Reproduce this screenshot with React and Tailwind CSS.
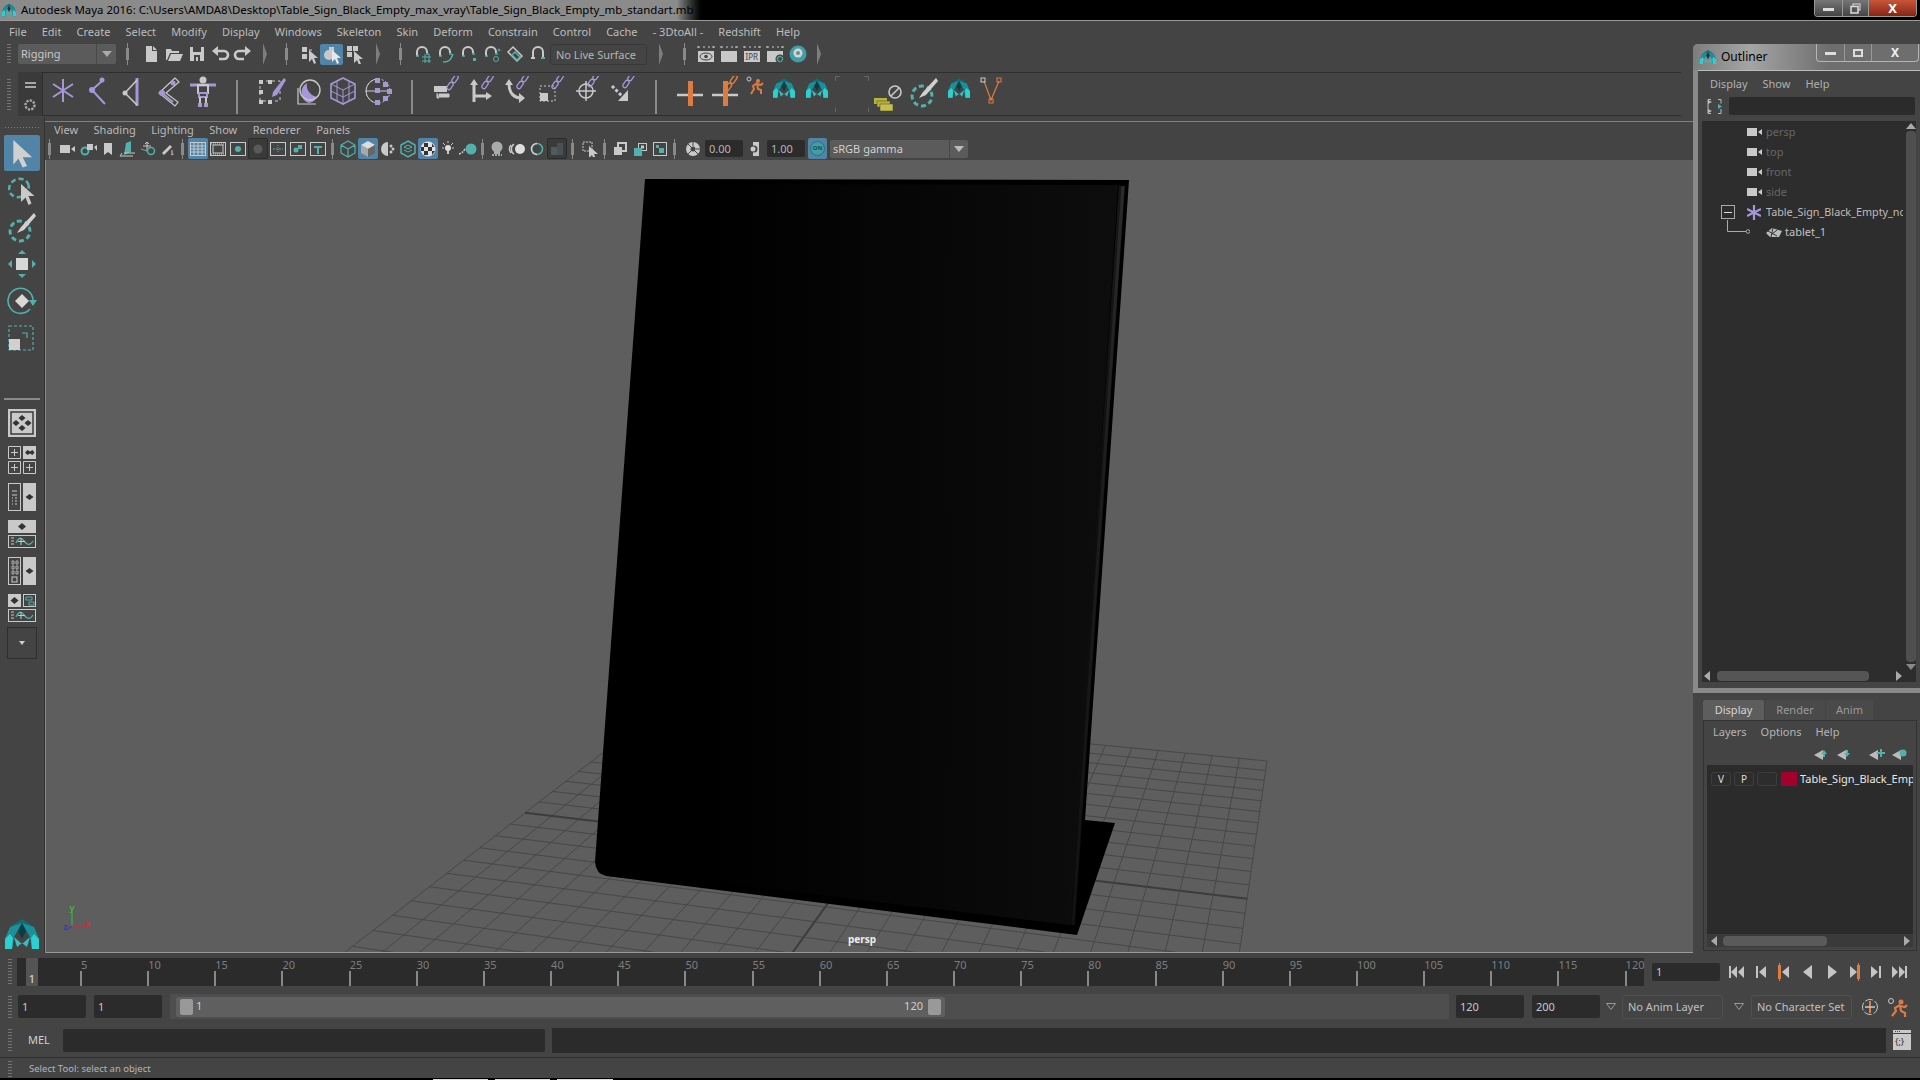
import React from "react";

const L = "#c9c9c9";
const T = "#52b0ad";
const P = "#a697d6";
const O = "#dd7b42";

const Svg = ({ w = 20, h = 20, children, className = "" }) => (
  <svg width={w} height={h} viewBox={`0 0 ${w} ${h}`} fill="none" className={`shrink-0 ${className}`}>
    {children}
  </svg>
);

// small toolbar bits
const Handle = ({ h = 22 }) => (
  <Svg w={3} h={h}>
    <rect x="1" width="1" height={h} fill="#8a8a8a" />
    <rect y={h / 2 - 6} width="3" height="12" fill="#8a8a8a" />
  </Svg>
);
const Fold = () => (
  <Svg w={4} h={22}>
    <path d="M0 0l4 11-4 11z" fill="#7d7d7d" />
  </Svg>
);
const Grip = ({ h = 22 }) => (
  <div className="w-[4px] shrink-0 bg-[radial-gradient(#777_35%,transparent_45%)] bg-[length:2px_3px]" style={{ height: h }} />
);

const Cell = ({ active, dark, w = "w-[20px]", children }) => (
  <div className={`${w} h-[21px] shrink-0 flex items-center justify-center ${active ? "bg-[#5284a8] rounded-[2px]" : ""} ${dark ? "bg-[#3a3a3a] border border-[#2b2b2b] rounded-[2px]" : ""}`}>
    {children}
  </div>
);

const Cursor = ({ x = 0, y = 0, s = 1, fill = L }) => (
  <path transform={`translate(${x} ${y}) scale(${s})`} d="M0 0l9 8H5l2 5-2 1-2-5-3 3z" fill={fill} />
);

const Cam = ({ c = L }) => (
  <Svg w={16} h={12}>
    <rect x="0" y="2" width="10" height="8" fill={c} />
    <path d="M11 6l4-3v6z" fill={c} />
  </Svg>
);

const NewFile = () => <Svg><path d="M5 2h6v5h5v11H5zM12 2l4 4h-4z" fill={L} /></Svg>;
const OpenFile = () => <Svg><path d="M2 5h5l1 2h7v2H6l-3 7H2z" fill={L} /><path d="M7 10h12l-3 7H4z" fill={L} /></Svg>;
const SaveFile = () => <Svg><path d="M3 3h14v14H3z" fill={L} /><rect x="6" y="3" width="8" height="5" fill="#444" /><rect x="7" y="11" width="6" height="6" fill="#444" /><rect x="9" y="13" width="2" height="4" fill={L} /></Svg>;
const Undo = () => <Svg><path d="M7 7h7a3.5 3.5 0 0 1 0 8H9" stroke={L} strokeWidth="2.6" /><path d="M8 2v10L2 7z" fill={L} /></Svg>;
const Redo = () => <Svg><path d="M13 7H6a3.5 3.5 0 0 0 0 8h5" stroke={L} strokeWidth="2.6" /><path d="M12 2v10l6-5z" fill={L} /></Svg>;

const SelHier = () => <Svg><rect x="3" y="3" width="5" height="5" fill={L} /><rect x="3" y="10" width="5" height="5" fill={L} /><path d="M10 6h3M10 12h2" stroke={L} /><Cursor x={10} y={6} /></Svg>;
const SelObj = () => <Svg><circle cx="7" cy="11" r="5" fill={L} /><rect x="7" y="3" width="5" height="5" fill={L} /><Cursor x={10} y={6} fill="#e8e8e8" /></Svg>;
const SelComp = () => <Svg><rect x="2" y="2" width="5" height="5" fill={L} /><rect x="8" y="2" width="5" height="5" fill={L} /><rect x="2" y="8" width="5" height="5" fill={L} /><Cursor x={9} y={7} /></Svg>;

const Magnet = ({ children }) => (
  <Svg>
    <path d="M4 12V8a5 5 0 0 1 10 0v1" stroke={L} strokeWidth="2" />
    <path d="M3 12h3M13 10h3" stroke={T} strokeWidth="1.5" />
    {children}
  </Svg>
);
const Snap1 = () => <Magnet><path d="M9 13h9M9 17h9M12 10v9M16 10v9" stroke={T} /></Magnet>;
const Snap2 = () => <Magnet><path d="M7 18c6 0 8-2 10-8" stroke={T} strokeWidth="1.5" /></Magnet>;
const Snap3 = () => <Magnet><rect x="14" y="14" width="3" height="3" fill={T} /></Magnet>;
const Snap4 = () => <Magnet><circle cx="14" cy="15" r="2.5" stroke={T} /><circle cx="17" cy="6" r="1" stroke={T} /></Magnet>;
const Snap5 = () => <Svg><path d="M3 8l5-5 9 9-5 5z" stroke={L} strokeWidth="1.5" /><path d="M7 11l3-3 5 5-3 3z" stroke={T} strokeWidth="1.5" /></Svg>;
const Snap6 = () => <Svg><path d="M5 14V8a5 5 0 0 1 10 0v6" stroke={L} strokeWidth="2" /><path d="M3 14h4" stroke={L} strokeWidth="2" /><path d="M13 14h4" stroke={T} strokeWidth="2" /></Svg>;

const Clap = ({ children }) => (
  <Svg h={22}>
    <path d="M2 4h3M7 4h3M12 4h3M16 4h2M2 3v3M18 3v3" stroke={L} strokeDasharray="2 1" />
    <rect x="2" y="8" width="16" height="11" fill={L} />
    {children}
  </Svg>
);
const RenderEye = () => <Clap><ellipse cx="10" cy="13.5" rx="6" ry="3.5" stroke="#444" /><circle cx="10" cy="13.5" r="1.8" fill="#444" /></Clap>;
const RenderPlain = () => <Clap />;
const RenderIpr = () => <Clap><text x="3.5" y="17" fontSize="8" fill="#444" fontFamily="Noto Sans">IPR</text></Clap>;
const RenderGear = () => <Clap><circle cx="15" cy="16" r="4.5" fill="#444" /><circle cx="15" cy="16" r="2.6" stroke={T} strokeWidth="1.5" strokeDasharray="1.5 .5" /></Clap>;
const Hypershade = () => <Svg w={20} h={20}><circle cx="10" cy="10" r="8.5" fill="#3f9fa8" /><circle cx="10" cy="9" r="4.5" fill="#d5d5d5" /><circle cx="10" cy="9" r="2" fill="#6a8e94" /></Svg>;

const Cam2 = () => <Svg w={18} h={14}><circle cx="6" cy="9" r="3.5" stroke={T} strokeWidth="2" /><rect x="8" y="2" width="6" height="6" fill={L} /><path d="M15 5l3-2v6z" fill={L} /></Svg>;
const Bookmark = () => <Svg w={10} h={14}><path d="M1 1h8v12L5 10l-4 3z" fill={L} /></Svg>;
const ImagePlane = () => <Svg w={18} h={16}><path d="M5 14l2-12 5-2v11z" fill={T} /><path d="M1 15h13M3 12l-2 3M16 12H5" stroke={L} /></Svg>;
const Gimbal = () => <Svg w={18} h={16}><path d="M8 1v9M4 5h8" stroke={L} /><path d="M6 3l2-2 2 2" stroke={L} /><circle cx="12" cy="10" r="3.5" stroke={T} strokeWidth="1.5" /><path d="M2 8l6 2" stroke={T} /></Svg>;
const Pencil = () => <Svg w={16} h={16}><path d="M2 12l8-8 2 2-8 8z" fill={L} /><path d="M11 14l3-1" stroke={O} /><path d="M12 9v5" stroke={L} /></Svg>;
const Box = ({ children }) => <Svg w={16} h={16}><rect x=".5" y="1.5" width="15" height="13" stroke={L} />{children}</Svg>;
const GridBox = () => <Box><path d="M4 2v12M8 2v12M12 2v12M1 5h14M1 8h14M1 11h14" stroke={L} /></Box>;
const FilmGate = () => <Svg w={16} h={14}><rect x=".5" y=".5" width="15" height="13" stroke={L} /><rect x="3" y="3" width="10" height="8" stroke={L} /><path d="M1 2h14M1 12h14" stroke={L} strokeDasharray="1 1" /></Svg>;
const DotBox = () => <Box><circle cx="8" cy="8" r="3" fill={T} /></Box>;
const DarkDot = () => <Svg w={14} h={14}><circle cx="7" cy="7" r="4.5" fill="#5a5a5a" /></Svg>;
const DashBox = () => <Box><path d="M3 8h10" stroke={T} strokeDasharray="2 1" /><path d="M8 4v8" stroke={T} strokeDasharray="1 1" /></Box>;
const ShapesBox = () => <Box><circle cx="6" cy="9" r="2.5" fill={T} /><rect x="8" y="4" width="4" height="4" fill={T} /></Box>;
const TBox = () => <Box><path d="M4 5h8v2H9v6H7V7H4z" fill={T} /></Box>;
const WireCube = () => <Svg w={16} h={18}><path d="M8 1l7 4v8l-7 4-7-4V5zM1 5l7 4 7-4M8 9v8" stroke={T} strokeWidth="1.2" /></Svg>;
const ShadedCube = () => <Svg w={16} h={18}><path d="M8 1l7 4-7 4-7-4z" fill="#ddd" /><path d="M1 5l7 4v8l-7-4z" fill="#a8a8a8" /><path d="M15 5l-7 4v8l7-4z" fill="#666" /></Svg>;
const HalfDisc = () => <Svg w={16} h={16}><path d="M8 1a7 7 0 0 0 0 14z" fill={L} /><circle cx="11" cy="5" r="1.5" fill={L} /><circle cx="13" cy="8" r="1.5" fill={L} /><circle cx="11" cy="11" r="1.5" fill={L} /></Svg>;
const WireHex = () => <Svg w={16} h={18}><path d="M8 1l7 4v8l-7 4-7-4V5z" stroke={T} strokeWidth="1.5" /><path d="M4 7l4 2 4-2-4-2zM4 10l4 2 4-2" stroke={T} /></Svg>;
const Checker = () => <Svg w={16} h={16}><circle cx="8" cy="8" r="7.5" fill="#e2e2e2" /><path d="M4 2h4v4H4zM8 6h4v4H8zM4 10h4v4H4zM12 2.5V6h2.5zM1 6h3v4H1zM12 10h3l-3 4z" fill="#333" /></Svg>;
const Light = () => <Svg w={16} h={16}><circle cx="8" cy="7" r="3" fill="#ddd" /><rect x="7" y="10" width="2" height="3" fill={L} /><path d="M8 0v2M2 7h2M12 7h2M3 2l2 2M13 2l-2 2" stroke={L} /></Svg>;
const Ball = () => <Svg w={20} h={16}><circle cx="13" cy="8" r="5.5" fill={T} /><path d="M1 13c3-1 4-2 6-5" stroke={L} strokeDasharray="2 1" strokeWidth="1.5" /></Svg>;
const Skull = () => <Svg w={14} h={16}><circle cx="7" cy="6" r="5.5" fill="#aaa" /><rect x="4" y="10" width="6" height="3" fill="#aaa" /><path d="M2 14h10" stroke="#8fb0b0" strokeDasharray="2 1" strokeWidth="2" /></Svg>;
const Discs = () => <Svg w={18} h={14}><circle cx="12" cy="7" r="5" fill="#ddd" /><path d="M6 2a6 6 0 0 0 0 10M3 3a6 6 0 0 0 0 8" stroke={L} strokeWidth="1.5" /></Svg>;
const Ring = () => <Svg w={14} h={14}><circle cx="7" cy="7" r="5.5" stroke={T} strokeWidth="1.5" /><path d="M7 1.5a5.5 5.5 0 0 0 0 11" stroke={L} strokeWidth="1.5" /></Svg>;
const DarkPanes = () => <Svg w={16} h={16}><rect x="2" y="6" width="6" height="8" fill="#4e5c60" /><rect x="8" y="2" width="6" height="12" fill="#4a5054" /></Svg>;
const SelRect = () => <Svg w={16} h={16}><rect x="1" y="1" width="9" height="9" stroke={L} strokeDasharray="2 1" /><Cursor x={7} y={5} /></Svg>;
const Overlap = () => <Svg w={14} h={14}><rect x="5" y="1" width="8" height="8" stroke={L} strokeWidth="2" /><rect x="1" y="5" width="8" height="8" fill={L} /></Svg>;
const Overlap2 = () => <Svg w={14} h={14}><rect x="5.5" y="1.5" width="8" height="7" stroke={L} /><rect x="8" y="3.5" width="3" height="3" fill={L} /><rect x="1" y="6" width="8" height="8" fill={T} /></Svg>;
const FieldBox = () => <Svg w={14} h={14}><rect x=".5" y=".5" width="13" height="13" stroke={L} /><rect x="3" y="3" width="3" height="3" fill={T} /><rect x="6" y="6" width="5" height="5" fill={T} /></Svg>;
const Aperture = () => <Svg w={16} h={16}><circle cx="8" cy="8" r="7" fill={L} /><circle cx="8" cy="8" r="2.5" fill="#444" /><path d="M8 1v4M15 8h-4M3 3l3 3M3 13l3-3M13 13l-3-3" stroke="#444" /></Svg>;
const Gamma = () => <Svg w={14} h={16}><rect x="5" y="1" width="6" height="14" fill={L} /><circle cx="6" cy="8" r="3.5" fill="#444" /><circle cx="5" cy="8" r="2.5" fill={L} /></Svg>;

// shelf
const Link = ({ x = 0, y = 0 }) => (
  <g transform={`translate(${x} ${y})`} stroke={P} strokeWidth="1.3">
    <rect x="7" y="-1" width="4" height="8" rx="2" transform="rotate(35 9 3)" />
    <rect x="2" y="6" width="4" height="8" rx="2" transform="rotate(35 4 10)" />
  </g>
);
const JointStar = () => <Svg w={28} h={30}><path d="M14 3v23M4 8l20 13M24 8L4 21" stroke={P} strokeWidth="2" /></Svg>;
const IkJoint = () => <Svg w={22} h={30}><circle cx="15" cy="4" r="2.5" fill={P} /><circle cx="5" cy="14" r="3" fill={P} /><path d="M15 5L5 14l13 14" stroke={P} strokeWidth="2" /></Svg>;
const IkHandle = () => <Svg w={22} h={32}><path d="M15 2v28" stroke={P} strokeWidth="3" /><path d="M15 4L3 17l12 12" stroke={L} strokeWidth="1.5" /><circle cx="3" cy="17" r="2.5" fill={L} /></Svg>;
const Spline = () => <Svg w={26} h={32}><path d="M20 2L4 17l16 13 3-4L11 17 24 6z" stroke={L} strokeWidth="1.2" /><circle cx="18" cy="7" r="2.5" fill={P} /><circle cx="7" cy="17" r="3" fill={P} /><path d="M7 17l11 9" stroke={P} strokeWidth="2" /></Svg>;
const Body = () => <Svg w={30} h={32}><circle cx="15" cy="4" r="3.5" fill={L} /><path d="M2 9h26" stroke={P} strokeWidth="3" /><rect x="10" y="9" width="10" height="8" stroke={L} strokeWidth="2" /><rect x="11" y="17" width="8" height="4" stroke={P} strokeWidth="2" /><path d="M12 21v8M18 21v8" stroke={L} strokeWidth="2" /><rect x="10" y="27" width="4" height="4" fill={P} /><rect x="16" y="27" width="4" height="4" fill={P} /></Svg>;
const BindPaint = () => <Svg w={30} h={30}><rect x="3" y="5" width="20" height="20" stroke={L} strokeDasharray="3 3" /><rect x="2" y="4" width="4" height="4" fill={L} /><rect x="11" y="4" width="4" height="4" fill={L} /><rect x="2" y="14" width="4" height="4" fill={L} /><rect x="2" y="24" width="4" height="4" fill={L} /><rect x="11" y="24" width="4" height="4" fill={L} /><path d="M27 2L16 16l-1 5 5-2L29 4z" fill={P} /></Svg>;
const Smooth = () => <Svg w={30} h={30}><path d="M5 12v16h18" stroke={L} strokeWidth="1.2" /><path d="M14 7a11 11 0 0 0 2 20 11 11 0 0 0 8-6A12 12 0 0 1 14 7z" fill={P} /><circle cx="17" cy="14" r="10" stroke={L} strokeWidth="1.4" /></Svg>;
const Lattice = () => <Svg w={28} h={30}><path d="M14 2l12 6v14l-12 6-12-6V8z" stroke={P} strokeWidth="1.6" /><path d="M2 8l12 6 12-6M14 14v14M2 15l12 6 12-6M8 5v20M20 5v20" stroke={P} /></Svg>;
const Cluster = () => <Svg w={30} h={30}><path d="M15 3a12 12 0 0 0 0 24" stroke={L} /><path d="M3 15h24" stroke={L} /><circle cx="15" cy="15" r="12" stroke={L} strokeDasharray="2 2" /><rect x="12" y="2" width="5" height="5" fill={P} /><rect x="20" y="6" width="5" height="5" fill={P} /><rect x="24" y="13" width="5" height="5" fill={P} /><rect x="12" y="12" width="5" height="5" fill={P} /><rect x="20" y="20" width="5" height="5" fill={P} /><rect x="12" y="24" width="5" height="5" fill={P} /></Svg>;
const ConstrainParent = () => <Svg w={26} h={26}><rect x="0" y="10" width="13" height="6" fill={L} /><path d="M3 17v5h2M5 21h10v-3H5z" stroke={L} fill={L} /><Link x={12} y={0} /></Svg>;
const ConstrainPoint = () => <Svg w={26} h={28}><path d="M5 26V7M5 20h14" stroke={L} strokeWidth="3" /><path d="M1 9l4-6 4 6zM17 16l6 4-6 4z" fill={L} /><Link x={12} y={-1} /></Svg>;
const ConstrainOrient = () => <Svg w={26} h={28}><path d="M5 8c0 9 5 14 12 14" stroke={L} strokeWidth="3" /><path d="M1 9l4-6 4 6zM15 17l6 5-6 5z" fill={L} /><Link x={12} y={-1} /></Svg>;
const ConstrainScale = () => <Svg w={26} h={26}><rect x="1" y="10" width="15" height="15" stroke={L} strokeDasharray="2 2" /><rect x="1" y="17" width="8" height="8" fill={L} /><Link x={12} y={-1} /></Svg>;
const ConstrainAim = () => <Svg w={26} h={26}><circle cx="11" cy="15" r="7" stroke={L} strokeWidth="1.5" /><path d="M11 5v20M1 15h20" stroke={L} strokeWidth="1.5" /><Link x={12} y={-3} /></Svg>;
const ConstrainPole = () => <Svg w={26} h={28}><path d="M2 10l14 14" stroke={L} strokeWidth="3" strokeDasharray="3 2" /><path d="M18 14v11H8z" fill={L} /><Link x={12} y={-2} /></Svg>;
const Bar = ({ link }) => <Svg w={30} h={30}><path d="M1 19h26" stroke={L} strokeWidth="2.5" /><rect x="12" y="5" width="5" height="26" fill={O} />{link && <g transform="translate(14 0)" stroke={O} strokeWidth="1.5"><rect x="7" y="-1" width="4" height="9" rx="2" transform="rotate(35 9 3)" /><rect x="2" y="7" width="4" height="9" rx="2" transform="rotate(35 4 10)" /></g>}</Svg>;
const Runner = () => <Svg w={20} h={20}><circle cx="3" cy="3" r="2" stroke={L} /><circle cx="12" cy="5" r="2" fill={O} /><path d="M11 7l-4 3 1 3-3 5M11 8l1 5 3 1v4M11 8l4 1 2-2" stroke={O} strokeWidth="2" /></Svg>;
const MayaGem = ({ w = 22, h = 24 }) => (
  <svg width={w} height={h} viewBox="0 0 34 30" className="shrink-0">
    <path d="M17 0l12 8 5 12v10h-7l-2-12-8-14-8 14-2 12H0V20L5 8z" fill="#0e6d75" />
    <path d="M17 4l-8 14-2 12H0V20L5 8zM17 4l8 14 2 12h7V20L29 8z" fill="#1d8f98" />
    <path d="M0 20l5-5 3 4-1 11H0zM34 20l-5-5-3 4 1 11h7z" fill="#2ecfd0" />
    <path d="M9 18l8 7 8-7-3 10-5-4-5 4z" fill="#35bfc2" />
    <path d="M13 12l4-8 4 8-4 8z" fill="#063f47" />
  </svg>
);
const LayerOff = () => <Svg w={30} h={30}><circle cx="22" cy="9" r="6" stroke={L} strokeWidth="1.6" /><path d="M18 13l8-8" stroke={L} strokeWidth="1.6" /><rect x="1" y="15" width="13" height="6" fill="#b9b23c" /><rect x="4" y="18" width="13" height="6" fill="#b9b23c" stroke="#444" strokeWidth=".5" /><rect x="7" y="21" width="13" height="7" fill="#c6c04a" stroke="#444" strokeWidth=".5" /></Svg>;
const PaintSel = ({ w = 30, h = 32 }) => (
  <svg width={w} height={h} viewBox="0 0 30 32" fill="none" className="shrink-0">
    <ellipse cx="13" cy="20" rx="10" ry="10" stroke={T} strokeWidth="3" strokeDasharray="5 3" transform="rotate(-25 13 20)" />
    <path d="M27 2L14 16l-4 6 7-3L29 5z" fill="#d0d0d0" />
  </svg>
);
const BoneV = () => <Svg w={24} h={28}><path d="M5 5l7 19L20 5" stroke={O} strokeWidth="1.2" /><rect x="2" y="2" width="4" height="4" stroke={L} /><rect x="18" y="2" width="4" height="4" stroke={O} /><rect x="10" y="23" width="4" height="4" stroke={O} /></Svg>;
const Gear = () => <Svg w={16} h={16}><circle cx="8" cy="8" r="4.5" stroke="#a8a8a8" strokeWidth="2.4" strokeDasharray="2.2 1.2" /></Svg>;

// left toolbox
const Lasso = () => <Svg w={30} h={30}><ellipse cx="12" cy="13" rx="10" ry="9" stroke={T} strokeWidth="2.6" strokeDasharray="5 3" transform="rotate(-25 12 13)" /><Cursor x={14} y={9} s={1.5} /></Svg>;
const Move = () => <Svg w={30} h={30}><rect x="9" y="9" width="12" height="12" fill="#d8d8d8" /><path d="M15 1l4 4h-8zM15 29l4-4h-8zM1 15l4-4v8zM29 15l-4-4v8z" fill={T} /></Svg>;
const Rotate = () => <Svg w={32} h={32}><path d="M24 24A12.5 12.5 0 1 1 27 15" stroke={T} strokeWidth="1.6" /><path d="M16 9l7 7-7 7-7-7z" fill="#d8d8d8" /><path d="M23 15h8l-4 6z" fill={T} /></Svg>;
const Scale = () => <Svg w={28} h={28}><rect x="1" y="2" width="24" height="24" stroke={T} strokeWidth="1.2" strokeDasharray="3 2" /><rect x="1" y="15" width="11" height="11" fill="#d0d0d0" /><path d="M14 9h5v5" stroke={T} strokeWidth="1.2" /></Svg>;

const Wave = ({ y }) => (
  <g>
    <rect x=".5" y={y + 0.5} width="27" height="12" stroke={L} />
    <path d={`M3 ${y + 3}h3M3 ${y + 6}h3M3 ${y + 9}h3`} stroke={L} />
    <path d={`M8 ${y + 8}c3-6 5-6 8-2s6 5 9 0`} stroke={T} strokeWidth="1.3" />
    <path d={`M13 ${y + 3}v7M10 ${y + 6.5}h7`} stroke={L} />
  </g>
);
const Layout1 = () => <Svg w={28} h={28}><rect width="28" height="28" fill={L} /><rect x="3" y="3" width="22" height="22" stroke="#3a3a3a" strokeWidth="1.5" /><path d="M14 6l3.500 3-3.500 3-3.500-3zM14 16l3.500 3-3.500 3-3.500-3zM8 11l3.500 3-3.500 3-3.500-3zM20 11l3.500 3-3.500 3-3.500-3z" fill="#333" /></Svg>;
const Layout2 = () => <Svg w={28} h={28}><path d="M.5.5h12v12H.5zM.5 15.5h12v12H.5zM15.5 15.5h12v12h-12z" stroke={L} /><path d="M6.5 3v7M3 6.5h7M6.5 18v7M3 21.5h7M21.5 18v7M18 21.5h7" stroke={L} /><rect x="15" width="13" height="13" fill={L} /><path d="M17 6.500l2.500-2.500 2.500 1.500 2.500-1.500 2 2.500-2 2.500-2.500-1.500-2.500 1.500z" fill="#333" /></Svg>;
const Layout3 = () => <Svg w={28} h={28}><rect x=".5" y=".5" width="12" height="27" stroke={L} /><path d="M4 8h5M4 12h5M4 15h1M7 15h2M4 18h1M7 18h2M4 21h1M7 21h2" stroke={L} /><rect x="15" width="13" height="28" fill={L} /><path d="M21.500 11l4 3-4 3-4-3z" fill="#333" /></Svg>;
const Layout4 = () => <Svg w={28} h={28}><rect y="0" width="28" height="13" fill={L} /><path d="M14 3l4 3.500-4 3.500-4-3.500z" fill="#333" /><Wave y={15} /></Svg>;
const Layout5 = () => <Svg w={28} h={28}><rect x=".5" y=".5" width="12" height="27" stroke={L} /><path d="M4 4h2v3H4zM8 4h2v3H8zM4 9h2v3H4zM8 9h2v3H8zM4 14h2v3H4zM8 14h2v3H8z" stroke={L} strokeWidth=".8" /><rect x="4" y="20" width="5" height="5" stroke={L} /><rect x="15" width="13" height="28" fill={L} /><path d="M21.500 11l4 3-4 3-4-3z" fill="#333" /></Svg>;
const Layout6 = () => <Svg w={28} h={28}><rect width="13" height="13" fill={L} /><path d="M6.500 3l4 3.500-4 3.500-4-3.500z" fill="#333" /><rect x="15.500" y=".5" width="12" height="12" stroke={L} /><path d="M18 3h6v3h-6zM21 8h5v3h-5z" stroke={T} /><Wave y={15} /></Svg>;

const PLAY = "#c4c4c4";
const Playback = () => (
  <div className="flex items-center">
    <Svg w={18} h={18}><path d="M2 3v12" stroke={PLAY} strokeWidth="2" /><path d="M9 3v12L3 9zM16 3v12l-6-6z" fill={PLAY} /></Svg>
    <Svg w={24} h={18} className="ml-[5px]"><path d="M6 3v12" stroke={PLAY} strokeWidth="2" /><path d="M15 3v12L8 9z" fill={PLAY} /></Svg>
    <Svg w={22} h={18}><rect x="3" y="2" width="3" height="14" fill={O} /><path d="M4.500 0v18" stroke={O} /><path d="M14 3v12L7 9z" fill={PLAY} /></Svg>
    <Svg w={24} h={18}><path d="M15 2v14L6 9z" fill={PLAY} /></Svg>
    <Svg w={23} h={18}><path d="M7 2v14l9-7z" fill={PLAY} /></Svg>
    <Svg w={22} h={18}><path d="M6 3v12l7-6z" fill={PLAY} /><rect x="13" y="2" width="3" height="14" fill={O} /><path d="M14.500 0v18" stroke={O} /></Svg>
    <Svg w={22} h={18}><path d="M5 3v12l7-6z" fill={PLAY} /><path d="M14 3v12" stroke={PLAY} strokeWidth="2" /></Svg>
    <Svg w={22} h={18}><path d="M4 3v12l6-6zM11 3v12l6-6z" fill={PLAY} /><path d="M18 3v12" stroke={PLAY} strokeWidth="2" /></Svg>
  </div>
);

// ground grid, worked out from the picture's corners
const corners = [[667, 703], [1267, 761], [1215, 1121], [309, 980]];
const homography = () => {
  const [[x0, y0], [x1, y1], [x2, y2], [x3, y3]] = corners;
  const dx1 = x1 - x2, dx2 = x3 - x2, sx = x0 - x1 + x2 - x3;
  const dy1 = y1 - y2, dy2 = y3 - y2, sy = y0 - y1 + y2 - y3;
  const den = dx1 * dy2 - dx2 * dy1;
  const g = (sx * dy2 - dx2 * sy) / den;
  const h = (dx1 * sy - sx * dy1) / den;
  const a = x1 - x0 + g * x1, b = x3 - x0 + h * x3, d = y1 - y0 + g * y1, e = y3 - y0 + h * y3;
  return (u, v) => {
    const w = g * u + h * v + 1;
    return [(a * u + b * v + x0) / w, (d * u + e * v + y0) / w];
  };
};

const Viewport3D = () => {
  const map = homography();
  const lines = [];
  for (let i = 0; i <= 24; i++) {
    const t = i / 24;
    lines.push([map(t, 0), map(t, 1), i === 12], [map(0, t), map(1, t), i === 12]);
  }
  return (
    <svg viewBox="46 160 1647 792" className="w-full h-full block">
      <defs>
        <linearGradient id="edge" gradientUnits="userSpaceOnUse" x1="0" y1="180" x2="0" y2="930">
          <stop offset="0" stopColor="#2c2c2c" />
          <stop offset="0.35" stopColor="#1e1e1e" />
          <stop offset="1" stopColor="#111" />
        </linearGradient>
        <linearGradient id="face" gradientUnits="userSpaceOnUse" x1="700" y1="0" x2="1120" y2="0">
          <stop offset="0" stopColor="#000" />
          <stop offset="1" stopColor="#0d0d0d" />
        </linearGradient>
      </defs>
      {lines.map(([p, q, heavy], i) => (
        <line key={i} x1={p[0]} y1={p[1]} x2={q[0]} y2={q[1]} stroke={heavy ? "#3c3c3c" : "#454545"} strokeWidth={heavy ? 2 : 0.9} />
      ))}
      <path d="M645 179L1129 180 1085 820 1115 823 1077 935 606 876Q596 874 595 862Z" fill="#000" />
      <path d="M650 184L1118 185 1070 925 612 870Z" fill="url(#face)" />
      <path d="M1122 186L1072 925" stroke="url(#edge)" strokeWidth="6" opacity="0.55" />
      <path d="M1123 186L1073 925" stroke="url(#edge)" strokeWidth="3" />
      <g transform="translate(72 926)" strokeWidth="1.2">
        <line x1="0" y1="0" x2="0" y2="-14" stroke="#3fb33f" />
        <line x1="0" y1="0" x2="14" y2="0" stroke="#c8323a" />
        <line x1="0" y1="0" x2="-6" y2="4" stroke="#3a3ac8" />
        <text x="-2.500" y="-15" fontSize="9" fontWeight="700" fill="#3fb33f" stroke="none" fontFamily="Noto Sans">y</text>
        <text x="13" y="1" fontSize="9" fontWeight="700" fill="#c8323a" stroke="none" fontFamily="Noto Sans">x</text>
        <text x="-9" y="4" fontSize="9" fontWeight="700" fill="#3a3ac8" stroke="none" fontFamily="Noto Sans">z</text>
      </g>
      <text x="848" y="943" fontSize="10" fontWeight="700" fill="#eee" fontFamily="Noto Sans">persp</text>
    </svg>
  );
};

const TitleBar = () => (
  <div className="h-[21px] bg-black border-b border-[#9a9a9a] flex justify-between shrink-0">
    <div className="w-[705px] flex items-center pl-[2px] gap-[5px] bg-gradient-to-r from-[#8b8b8b] via-[#8b8b8b] via-[96%] to-black">
      <MayaGem w={14} h={14} />
      <span className="text-[11.450px] text-black whitespace-nowrap">
        Autodesk Maya 2016: C:\Users\AMDA8\Desktop\Table_Sign_Black_Empty_max_vray\Table_Sign_Black_Empty_mb_standart.mb
      </span>
    </div>
    <div className="flex h-[17px] mr-[3px] border border-t-0 border-[#999] rounded-b-[4px] overflow-hidden">
      <div className="w-[28px] flex items-center justify-center bg-gradient-to-b from-[#777] to-[#444] border-r border-[#999]">
        <div className="w-[11px] h-[3px] bg-[#ddd] mt-[3px]" />
      </div>
      <div className="w-[26px] flex items-center justify-center bg-gradient-to-b from-[#777] to-[#444] border-r border-[#999]">
        <Svg w={11} h={11}><rect x="3" y="1" width="7" height="6" stroke="#ddd" /><rect x="1" y="3.500" width="7" height="6.500" stroke="#ddd" strokeWidth="1.500" fill="#555" /></Svg>
      </div>
      <div className="w-[47px] flex items-center justify-center bg-gradient-to-b from-[#c8553a] to-[#8a2412] text-white text-[13px] font-bold leading-none">
        X
      </div>
    </div>
  </div>
);

const menus = ["File", "Edit", "Create", "Select", "Modify", "Display", "Windows", "Skeleton", "Skin", "Deform", "Constrain", "Control", "Cache", "- 3DtoAll -", "Redshift", "Help"];

const MenuBar = () => (
  <div className="h-[22px] flex items-center pl-[9px] gap-[15.150px] text-[11px] text-[#bdbdbd] shrink-0">
    {menus.map((m) => (
      <span key={m} className="whitespace-nowrap">{m}</span>
    ))}
  </div>
);

const StatusLine = () => (
  <div className="h-[22px] flex items-center shrink-0">
    <div className="ml-[7px]"><Grip h={22} /></div>
    <div className="ml-[7px] w-[98px] h-[20px] flex bg-[#5b5b5b] rounded-[2px] text-[11px] text-[#c8c8c8]">
      <span className="flex-1 pl-[3px] leading-[20px]">Rigging</span>
      <div className="w-[20px] border-l border-[#484848] flex items-center justify-center">
        <Svg w={10} h={6}><path d="M0 0h10L5 6z" fill="#aaa" /></Svg>
      </div>
    </div>
    <div className="ml-[10px]"><Handle /></div>
    <div className="flex ml-[10px]">
      <Cell w="w-[23px]"><NewFile /></Cell>
      <Cell w="w-[23px]"><OpenFile /></Cell>
      <Cell w="w-[23px]"><SaveFile /></Cell>
      <Cell w="w-[23px]"><Undo /></Cell>
      <Cell w="w-[23px]"><Redo /></Cell>
    </div>
    <div className="ml-[9px]"><Fold /></div>
    <div className="ml-[18px]"><Handle /></div>
    <div className="flex ml-[9px]">
      <Cell w="w-[23px]"><SelHier /></Cell>
      <Cell w="w-[23px]" active><SelObj /></Cell>
      <Cell w="w-[23px]"><SelComp /></Cell>
    </div>
    <div className="ml-[10px]"><Fold /></div>
    <div className="ml-[19px]"><Handle /></div>
    <div className="flex ml-[9px]">
      <Cell w="w-[23px]"><Snap1 /></Cell>
      <Cell w="w-[23px]"><Snap2 /></Cell>
      <Cell w="w-[23px]"><Snap3 /></Cell>
      <Cell w="w-[23px]"><Snap4 /></Cell>
      <Cell w="w-[23px]"><Snap5 /></Cell>
      <Cell w="w-[23px]"><Snap6 /></Cell>
    </div>
    <div className="ml-[1px] w-[97px] h-[21px] border border-[#383838] rounded-[3px] text-[11px] text-[#b5b5b5] leading-[19px] pl-[5px] whitespace-nowrap">
      No Live Surface
    </div>
    <div className="ml-[12px]"><Fold /></div>
    <div className="ml-[20px]"><Handle /></div>
    <div className="flex ml-[8px]">
      <Cell w="w-[23px]"><RenderEye /></Cell>
      <Cell w="w-[23px]"><RenderPlain /></Cell>
      <Cell w="w-[23px]"><RenderIpr /></Cell>
      <Cell w="w-[23px]"><RenderGear /></Cell>
      <Cell w="w-[23px]"><Hypershade /></Cell>
    </div>
    <div className="ml-[8px]"><Fold /></div>
  </div>
);

const ShelfItem = ({ w, children }) => <div className={`${w} shrink-0 flex items-start justify-center pt-[1px]`}>{children}</div>;
const ShelfSep = () => <div className="w-[2px] h-[34px] bg-[#8a8a8a] shrink-0 self-start mt-[5px]" />;

const Shelf = () => (
  <div className="h-[44px] flex mt-[7px] shrink-0">
    <div className="ml-[7px] pt-[6px]"><Grip h={34} /></div>
    <div className="ml-[7px] w-[24px] bg-[#3a3a3a] flex flex-col items-center pt-[10px] gap-[9px]">
      <div className="w-[11px] h-[6px] border-y-2 border-[#a8a8a8]" />
      <Gear />
    </div>
    <div className="flex-1 border-y border-[#2e2e2e] border-l flex items-start pt-[2px] pl-[2px] mr-[12px]">
      <ShelfItem w="w-[35px]"><JointStar /></ShelfItem>
      <ShelfItem w="w-[35px]"><IkJoint /></ShelfItem>
      <ShelfItem w="w-[35px]"><IkHandle /></ShelfItem>
      <ShelfItem w="w-[35px]"><Spline /></ShelfItem>
      <ShelfItem w="w-[36px]"><Body /></ShelfItem>
      <ShelfItem w="w-[15px]" />
      <ShelfSep />
      <ShelfItem w="w-[16px]" />
      <ShelfItem w="w-[36px]"><BindPaint /></ShelfItem>
      <ShelfItem w="w-[36px]"><Smooth /></ShelfItem>
      <ShelfItem w="w-[34px]"><Lattice /></ShelfItem>
      <ShelfItem w="w-[36px]"><Cluster /></ShelfItem>
      <ShelfItem w="w-[15px]" />
      <ShelfSep />
      <ShelfItem w="w-[16px]" />
      <ShelfItem w="w-[36px]"><ConstrainParent /></ShelfItem>
      <ShelfItem w="w-[34px]"><ConstrainPoint /></ShelfItem>
      <ShelfItem w="w-[35px]"><ConstrainOrient /></ShelfItem>
      <ShelfItem w="w-[36px]"><ConstrainScale /></ShelfItem>
      <ShelfItem w="w-[35px]"><ConstrainAim /></ShelfItem>
      <ShelfItem w="w-[35px]"><ConstrainPole /></ShelfItem>
      <ShelfItem w="w-[15px]" />
      <ShelfSep />
      <ShelfItem w="w-[16px]" />
      <ShelfItem w="w-[36px]"><Bar /></ShelfItem>
      <ShelfItem w="w-[34px]"><Bar link /></ShelfItem>
      <ShelfItem w="w-[26px]"><Runner /></ShelfItem>
      <ShelfItem w="w-[30px]"><MayaGem /></ShelfItem>
      <ShelfItem w="w-[35px]"><MayaGem /></ShelfItem>
      <ShelfItem w="w-[36px]"><div className="w-[34px] h-[36px] relative"><span className="absolute left-0 top-0 w-[5px] h-[5px] border-l border-t border-[#666]" /><span className="absolute right-0 top-0 w-[5px] h-[5px] border-r border-t border-[#666]" /><span className="absolute left-0 bottom-0 h-[4px] border-l border-[#666]" /><span className="absolute right-0 bottom-0 h-[4px] border-l border-[#666]" /></div></ShelfItem>
      <ShelfItem w="w-[36px]"><div className="pt-[7px]"><LayerOff /></div></ShelfItem>
      <ShelfItem w="w-[35px]"><PaintSel /></ShelfItem>
      <ShelfItem w="w-[36px]"><MayaGem /></ShelfItem>
      <ShelfItem w="w-[28px]"><BoneV /></ShelfItem>
    </div>
  </div>
);

const panelMenus = ["View", "Shading", "Lighting", "Show", "Renderer", "Panels"];

const PanelBar = () => (
  <div className="shrink-0">
    <div className="h-[17px] flex items-center pl-[9px] gap-[15.500px] text-[11px] text-[#b9b9b9]">
      {panelMenus.map((m) => <span key={m}>{m}</span>)}
    </div>
    <div className="h-[19px] mb-[2px] flex items-center pl-[3px]">
      <Handle h={20} />
      <div className="flex ml-[7px]">
        <Cell><Cam /></Cell><Cell><Cam2 /></Cell><Cell><Bookmark /></Cell><Cell><ImagePlane /></Cell><Cell><Gimbal /></Cell><Cell><Pencil /></Cell>
      </div>
      <div className="ml-[3px]"><Handle h={20} /></div>
      <div className="flex ml-[4px]">
        <Cell active><GridBox /></Cell><Cell><FilmGate /></Cell><Cell><DotBox /></Cell><Cell dark><DarkDot /></Cell><Cell><DashBox /></Cell><Cell><ShapesBox /></Cell><Cell><TBox /></Cell>
      </div>
      <div className="ml-[3px]"><Handle h={20} /></div>
      <div className="flex ml-[4px]">
        <Cell><WireCube /></Cell><Cell active><ShadedCube /></Cell><Cell><HalfDisc /></Cell><Cell><WireHex /></Cell><Cell active><Checker /></Cell><Cell><Light /></Cell><Cell><Ball /></Cell>
      </div>
      <div className="ml-[3px]"><Handle h={20} /></div>
      <div className="flex ml-[3px]">
        <Cell><Skull /></Cell><Cell><Discs /></Cell><Cell><Ring /></Cell><Cell dark><DarkPanes /></Cell>
      </div>
      <div className="ml-[4px]"><Handle h={20} /></div>
      <div className="ml-[6px]"><Cell><SelRect /></Cell></div>
      <div className="ml-[3px]"><Handle h={20} /></div>
      <div className="flex ml-[4px]">
        <Cell><Overlap /></Cell><Cell><Overlap2 /></Cell><Cell><FieldBox /></Cell>
      </div>
      <div className="ml-[3px]"><Handle h={20} /></div>
      <div className="ml-[7px]"><Cell><Aperture /></Cell></div>
      <div className="ml-[2px] w-[38px] h-[17px] bg-[#2b2b2b] rounded-[2px] text-[11px] text-[#b5b5b5] leading-[17px] pl-[4px]">0.00</div>
      <Cell w="w-[24px]"><Gamma /></Cell>
      <div className="w-[38px] h-[17px] bg-[#2b2b2b] rounded-[2px] text-[11px] text-[#b5b5b5] leading-[17px] pl-[4px]">1.00</div>
      <div className="ml-[3px] w-[19px] h-[21px] bg-[#5284a8] rounded-[2px] flex items-center justify-center">
        <div className="w-[15px] h-[15px] rounded-full bg-[#3f9fa8] border border-[#2a6f78] text-[6px] text-[#1d4d55] font-bold flex items-center justify-center">ON</div>
      </div>
      <div className="ml-[3px] w-[138px] h-[18px] bg-[#5b5b5b] rounded-[2px] flex text-[11px] text-[#d0d0d0]">
        <span className="flex-1 pl-[3px] leading-[18px]">sRGB gamma</span>
        <div className="w-[19px] border-l border-[#484848] flex items-center justify-center">
          <Svg w={10} h={6}><path d="M0 0h10L5 6z" fill="#bbb" /></Svg>
        </div>
      </div>
    </div>
  </div>
);

const Toolbox = () => (
  <div className="w-[45px] shrink-0 flex flex-col items-center border-r border-[#333] pt-[9px] pb-[4px]">
    <div className="w-[36px] h-[3px] bg-[radial-gradient(#8a7f60_35%,transparent_45%)] bg-[length:3px_3px]" />
    <div className="mt-[6px] w-[36px] h-[36px] bg-[#5284a8] rounded-[2px] flex items-center justify-center">
      <svg width="26" height="30" viewBox="0 0 18 20"><path d="M3 1l13 12H9.500l3 6-3 1-3-6L3 18z" fill="#d0d0d0" /></svg>
    </div>
    <div className="h-[37px] flex items-center justify-center"><Lasso /></div>
    <div className="h-[37px] flex items-center justify-center"><PaintSel w={32} h={32} /></div>
    <div className="h-[37px] flex items-center justify-center"><Move /></div>
    <div className="h-[37px] flex items-center justify-center"><Rotate /></div>
    <div className="h-[37px] flex items-center justify-center"><Scale /></div>
    <div className="mt-[42px] w-[36px] h-[2px] bg-[#8a8a8a]" />
    <div className="mt-[9px] flex flex-col gap-[9px]">
      <Layout1 /><Layout2 /><Layout3 /><Layout4 /><Layout5 /><Layout6 />
    </div>
    <div className="mt-[5px] w-[30px] h-[32px] border border-[#2e2e2e] flex items-center justify-center">
      <Svg w={6} h={4}><path d="M0 0h6L3 4z" fill="#ccc" /></Svg>
    </div>
    <div className="mt-auto"><MayaGem w={34} h={30} /></div>
  </div>
);

const ScrollArrow = ({ dir, c = "#aaa" }) => {
  const d = { up: "M0 6l5-6 5 6z", down: "M0 0l5 6 5-6z", left: "M6 0L0 5l6 5z", right: "M0 0l6 5-6 5z" }[dir];
  return <Svg w={dir === "up" || dir === "down" ? 10 : 6} h={dir === "up" || dir === "down" ? 6 : 10}><path d={d} fill={c} /></Svg>;
};

const TreeCam = ({ name }) => (
  <div className="h-[20px] flex items-center pl-[45px] gap-[3px] text-[#666]">
    <Cam />
    <span>{name}</span>
  </div>
);

const Outliner = () => (
  <div className="h-[649px] shrink-0 flex flex-col rounded-tl-[5px] bg-[#8a8a8a] pl-[5px] pb-[5px]">
    <div className="h-[26px] -ml-[5px] flex justify-between rounded-tl-[5px] bg-gradient-to-r from-[#7d7d7d] via-[#a5a5a5] via-[25%] to-[#6e6e6e] to-[60%] shrink-0">
      <div className="flex items-center pl-[7px] gap-[5px] text-[12px] text-black">
        <MayaGem w={16} h={16} />
        <span>Outliner</span>
      </div>
      <div className="flex h-[18px] mr-[1px] border border-t-0 border-[#b5b5b5] rounded-b-[4px] text-[#eee]">
        <div className="w-[28px] flex items-center justify-center border-r border-[#999]"><div className="w-[11px] h-[3px] bg-[#ddd] mt-[2px]" /></div>
        <div className="w-[27px] flex items-center justify-center border-r border-[#999]"><div className="w-[10px] h-[8px] border-2 border-[#ddd]" /></div>
        <div className="w-[46px] flex items-center justify-center text-[12px] font-bold leading-none">X</div>
      </div>
    </div>
    <div className="flex-1 flex flex-col bg-[#444] border-t border-[#bdbdbd] min-h-0 pr-[4px]">
      <div className="h-[26px] pt-[1px] shrink-0 flex items-center pl-[12px] gap-[15px] text-[11px] text-[#b0b0b0]">
        <span>Display</span><span>Show</span><span>Help</span>
      </div>
      <div className="h-[18px] shrink-0 flex items-center pl-[9px] gap-[6px]">
        <Svg w={16} h={17}><path d="M4 1.500H1v14h3M11 1.500h3v4M14 11v4.500h-3" stroke="#bbb" /><path d="M1 2l4 2-4 2zM1 11l4 2-4 2z" fill="#bbb" /><path d="M11 6l4 2.500-4 2.500z" fill={T} /></Svg>
        <div className="flex-1 h-[18px] bg-[#2b2b2b] rounded-[2px] mr-[1px]" />
      </div>
      <div className="mt-[6px] ml-[4px] flex-1 min-h-0 flex bg-[#2d2d2d] text-[11px]">
        <div className="flex-1 pt-[1px] min-w-0">
          <TreeCam name="persp" />
          <TreeCam name="top" />
          <TreeCam name="front" />
          <TreeCam name="side" />
          <div className="h-[20px] flex items-center pl-[19px]">
            <div className="w-[14px] h-[14px] border border-[#aaa] flex items-center justify-center"><div className="w-[8px] h-[1px] bg-[#ddd]" /></div>
            <div className="ml-[12px]">
              <Svg w={14} h={15}><path d="M7 0v15M0 4l14 7M14 4L0 11" stroke={P} strokeWidth="2.200" /></Svg>
            </div>
            <span className="ml-[5px] text-[#bdbdbd] whitespace-nowrap overflow-hidden w-[137px] text-[10.800px]">Table_Sign_Black_Empty_nc</span>
          </div>
          <div className="h-[20px] flex items-center pl-[25px] text-[#c4c4c4]">
            <Svg w={23} h={16} className="-mt-[8px]"><path d="M.500 0v11.500H19" stroke="#aaa" /><circle cx="21" cy="11.500" r="1.800" stroke="#aaa" /></Svg>
            <Svg w={18} h={12} className="ml-[15px]"><path d="M1 7l6-5 10 3-3 6-9 0z" fill="#bbb" /><path d="M3 5l9 5M8 2l-2 9M12 4l-6 5" stroke="#333" /></Svg>
            <span className="ml-[2px]">tablet_1</span>
          </div>
        </div>
        <div className="w-[11px] flex flex-col items-center shrink-0 bg-[#2d2d2d]">
          <div className="pt-[2px]"><ScrollArrow dir="up" /></div>
          <div className="flex-1 w-[10px] mt-[2px] mb-[2px] bg-[#4f4f4f] rounded-[4px]" />
          <ScrollArrow dir="down" c="#888" />
        </div>
      </div>
      <div className="h-[12px] ml-[4px] shrink-0 flex items-center bg-[#2d2d2d] pl-[2px] pr-[14px] gap-[7px] mb-[6px]">
        <ScrollArrow dir="left" />
        <div className="w-[152px] h-[10px] bg-[#555] rounded-[4px]" />
        <div className="flex-1" />
        <ScrollArrow dir="right" />
      </div>
    </div>
  </div>
);

const LayerBtn = ({ t }) => (
  <div className="w-[20px] h-[14px] border border-[#3c3c3c] bg-[#2d2d2d] rounded-[2px] text-[10px] leading-[12px] text-center text-[#ddd]">{t}</div>
);

const Arr = ({ children }) => (
  <Svg w={16} h={12}><path d="M0 6l9-5v10z" fill="#bbb" />{children}</Svg>
);

const LayerPanel = () => (
  <div className="flex-1 min-h-0 flex flex-col pl-[10px] pr-[3px] pt-[7px] pb-[2px]">
    <div className="h-[20px] shrink-0 flex text-[11px] gap-[1px]">
      <div className="w-[61px] bg-[#5d5d5d] rounded-t-[2px] text-[#d5d5d5] text-center leading-[20px]">Display</div>
      <div className="w-[60px] bg-[#4a4a4a] text-[#9a9a9a] text-center leading-[20px]">Render</div>
      <div className="w-[47px] bg-[#4a4a4a] text-[#9a9a9a] text-center leading-[20px]">Anim</div>
    </div>
    <div className="flex-1 min-h-0 flex flex-col border border-[#333] px-[3px] pb-[3px]">
      <div className="h-[23px] shrink-0 flex items-center pl-[6px] gap-[14px] text-[11px] text-[#b5b5b5]">
        <span>Layers</span><span>Options</span><span>Help</span>
      </div>
      <div className="h-[21px] shrink-0 flex items-center justify-end pr-[5px] gap-[7px]">
        <Arr><path d="M9 8V5H7l3-4 3 4h-2v3z" fill={T} /></Arr>
        <Arr><path d="M9 1v3H7l3 4 3-4h-2V1z" fill={T} /></Arr>
        <div className="w-[2px]" />
        <Arr><path d="M11 0v3H8v2h3v3h2V5h3V3h-3V0z" fill={T} /></Arr>
        <Arr><circle cx="11" cy="4" r="3.500" fill={T} /></Arr>
      </div>
      <div className="flex-1 min-h-0 bg-[#2b2b2b] pt-[6px] pl-[4px]">
        <div className="flex items-center gap-[3px] text-[11px] text-[#e8e8e8]">
          <LayerBtn t="V" /><LayerBtn t="P" /><LayerBtn t="" />
          <div className="w-[16px] h-[14px] bg-[#a3002e] ml-[1px] shrink-0" />
          <span className="whitespace-nowrap overflow-hidden w-[113px]">Table_Sign_Black_Emp</span>
        </div>
      </div>
      <div className="h-[13px] shrink-0 flex items-center bg-[#3a3a3a] pl-[4px] pr-[3px] gap-[6px]">
        <ScrollArrow dir="left" />
        <div className="w-[104px] h-[10px] bg-[#5a5a5a] rounded-[4px]" />
        <div className="flex-1" />
        <ScrollArrow dir="right" />
      </div>
    </div>
  </div>
);

const ticks = Array.from({ length: 24 }, (_, i) => (i + 1) * 5);

const DarkField = ({ w, children, className = "" }) => (
  <div className={`${w} h-[23px] bg-[#2b2b2b] rounded-[2px] text-[11px] text-[#c8c8c8] leading-[23px] pl-[4px] shrink-0 ${className}`}>{children}</div>
);
const Tri = () => <Svg w={10} h={7}><path d="M.500.500h9l-4.500 6z" stroke="#999" /></Svg>;

const TimeControls = () => (
  <div className="shrink-0 flex flex-col h-[125px]">
    {/* time slider */}
    <div className="h-[37px] flex items-center">
      <div className="ml-[8px]"><Grip h={28} /></div>
      <div className="ml-[5px] w-[1627px] h-[28px] mt-[1px] bg-[#2b2b2b] flex items-stretch text-[11px]">
        <div className="ml-[9px] w-[12px] bg-[#545454] text-[#e0e0e0] text-center flex items-end justify-center leading-[15px]">1</div>
        <div className="w-[42px] shrink-0" />
        {ticks.map((t) => (
          <div key={t} className={`${t === 120 ? "w-[19px]" : "w-[67.170px]"} shrink-0 flex flex-col justify-between`}>
            <span className="text-[#7e7e7e] leading-[13px] whitespace-nowrap pl-[1px]">{t}</span>
            <div className="w-[2px] h-[15px] bg-[#888]" />
          </div>
        ))}
      </div>
      <div className="ml-[8px] w-[68px] h-[18px] bg-[#2b2b2b] rounded-[2px] text-[11px] text-[#c8c8c8] leading-[18px] pl-[4px]">1</div>
      <div className="ml-[8px]"><Playback /></div>
    </div>
    {/* range slider */}
    <div className="h-[33px] flex items-center">
      <div className="ml-[8px]"><Grip h={24} /></div>
      <div className="ml-[6px]"><DarkField w="w-[68px]">1</DarkField></div>
      <div className="ml-[8px]"><DarkField w="w-[68px]">1</DarkField></div>
      <div className="ml-[8px] w-[1279px] h-[25px] bg-[#4e4e4e] flex items-center pl-[6px] shrink-0">
        <div className="w-[769px] h-[20px] bg-[#5f5f5f] rounded-[2px] flex items-center justify-between px-[4px] text-[11px] text-[#d0d0d0]">
          <div className="flex items-center gap-[3px]">
            <div className="w-[13px] h-[16px] bg-[#999] rounded-[2px]" />
            <span>1</span>
          </div>
          <div className="flex items-center gap-[5px]">
            <span>120</span>
            <div className="w-[13px] h-[16px] bg-[#999] rounded-[2px]" />
          </div>
        </div>
      </div>
      <div className="ml-[7px]"><DarkField w="w-[68px]">120</DarkField></div>
      <div className="ml-[8px]"><DarkField w="w-[68px]">200</DarkField></div>
      <div className="ml-[6px]"><Tri /></div>
      <div className="ml-[6px] w-[101px] h-[24px] border border-[#505050] rounded-[3px] text-[11px] text-[#c0c0c0] leading-[22px] pl-[5px] whitespace-nowrap">No Anim Layer</div>
      <div className="ml-[11px]"><Tri /></div>
      <div className="ml-[7px] w-[101px] h-[24px] border border-[#505050] rounded-[3px] text-[11px] text-[#c0c0c0] leading-[22px] pl-[5px] whitespace-nowrap">No Character Set</div>
      <div className="ml-[9px]">
        <Svg w={18} h={18}><circle cx="9" cy="9" r="7.500" stroke={L} strokeDasharray="8 2" /><path d="M9 3v12" stroke={O} strokeWidth="2" /><path d="M4 9h10" stroke={L} strokeWidth="1.500" /></Svg>
      </div>
      <div className="ml-[7px]"><Svg w={24} h={22}><circle cx="5" cy="5" r="2.500" stroke={L} /><circle cx="15" cy="6" r="2.500" fill={O} /><path d="M14 9l-5 3 1 3-4 5M14 9l1 6 4 2v4M14 10l5 1 2-2" stroke={O} strokeWidth="2.200" /></Svg></div>
    </div>
    {/* command line */}
    <div className="h-[35px] flex items-center border-b border-[#2f2f2f]">
      <div className="ml-[8px]"><Grip h={24} /></div>
      <span className="ml-[16px] w-[35px] text-[11px] text-[#d0d0d0] shrink-0">MEL</span>
      <div className="w-[482px] h-[23px] bg-[#2b2b2b] rounded-[2px] shrink-0" />
      <div className="ml-[7px] w-[1334px] h-[25px] bg-[#2b2b2b] shrink-0" />
      <div className="ml-[7px]">
        <Svg w={18} h={20}><rect width="18" height="20" fill={L} /><rect y="3" width="18" height="1" fill="#444" /><path d="M2 1.500h5" stroke="#444" strokeDasharray="1 1" /><text x="2" y="15" fontSize="9" fill="#333" fontFamily="Noto Sans">{"{;}"}</text></Svg>
      </div>
    </div>
    {/* help line */}
    <div className="flex-1 flex items-center pt-[2px]">
      <div className="ml-[8px]"><Grip h={18} /></div>
      <span className="ml-[17px] text-[9.500px] text-[#b5b5b5]">Select Tool: select an object</span>
    </div>
  </div>
);

export default function App() {
  return (
    <div className="w-[1920px] h-[1080px] overflow-hidden flex flex-col bg-[#444] font-['Noto_Sans',sans-serif]">
      <TitleBar />
      <MenuBar />
      <div className="h-[910px] flex shrink-0">
        <div className="w-[1693px] shrink-0 flex flex-col">
          <StatusLine />
          <Shelf />
          <div className="flex-1 min-h-0 flex mt-[1px]">
            <Toolbox />
            <div className="flex-1 min-w-0 flex flex-col mt-[4px] border-t border-[#808080]">
              <PanelBar />
              <div className="flex-1 min-h-0 bg-[#5e5e5e] border-b border-[#999] border-l border-l-[#888]">
                <Viewport3D />
              </div>
            </div>
          </div>
        </div>
        <div className="w-[227px] shrink-0 flex flex-col pt-[1px]">
          <Outliner />
          <LayerPanel />
        </div>
      </div>
      <TimeControls />
      <div className="h-[2px] bg-black flex shrink-0 border-t border-black">
        <div className="ml-[433px] w-[55px] bg-[#ddd]" />
        <div className="ml-[7px] w-[55px] bg-[#ddd]" />
        <div className="ml-[7px] w-[56px] bg-[#ddd]" />
      </div>
    </div>
  );
}
